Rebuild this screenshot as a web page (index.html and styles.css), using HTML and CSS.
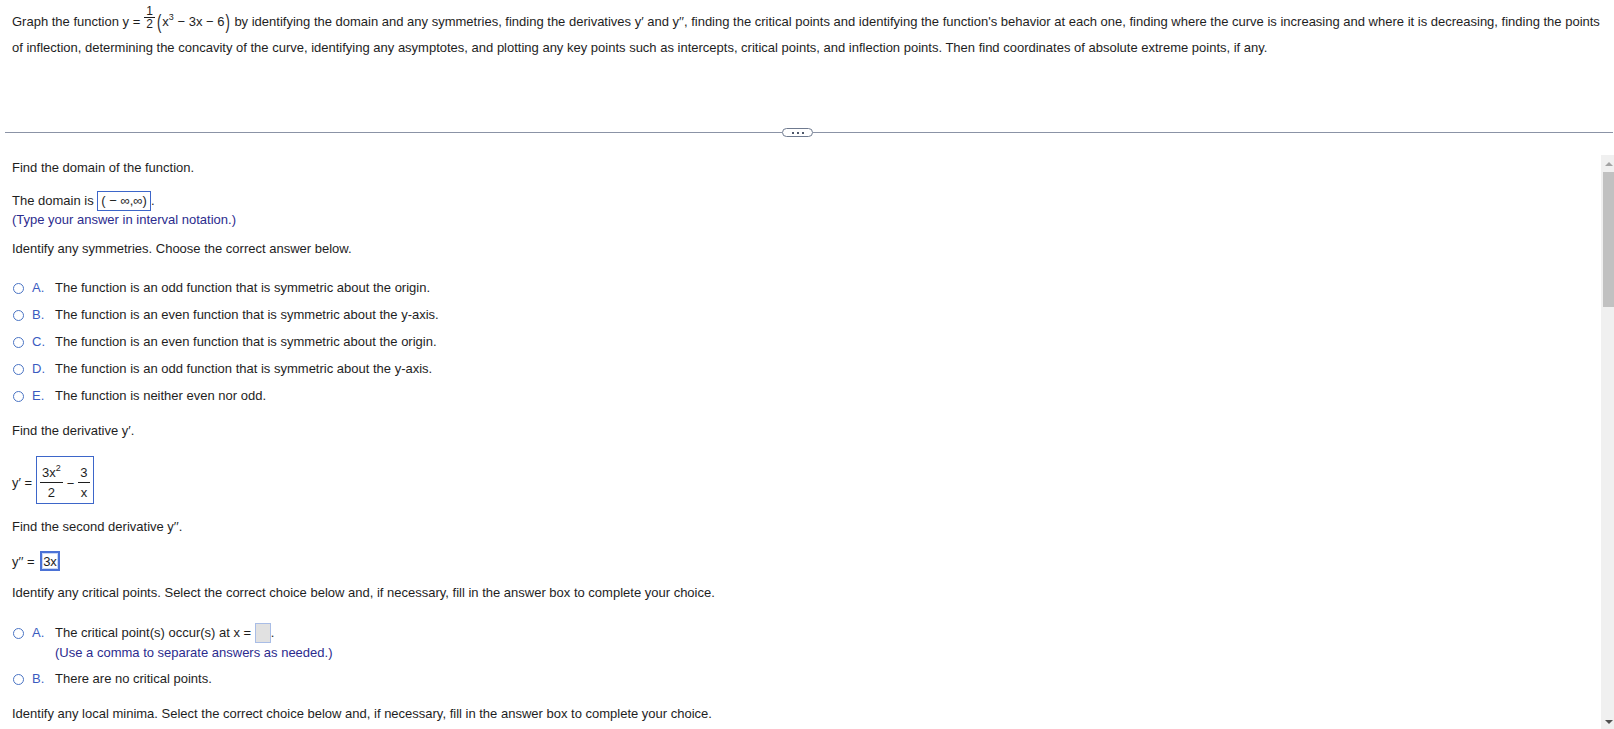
FILE: index.html
```
<!DOCTYPE html>
<html lang="en">
<head>
<meta charset="utf-8">
<title>Graph the function</title>
<link rel="stylesheet" href="styles.css">
</head>
<body>
<div class="page">
  <header class="question">
    <p class="prompt">Graph the function <span class="math">y =<span class="hfrac"><span class="hnum">1</span><span class="hden">2</span></span><span class="paren">(</span>x<sup class="sup">3</sup> − 3x − 6<span class="paren">)</span></span> by identifying the domain and any symmetries, finding the derivatives y′ and y′′, finding the critical points and identifying the function's behavior at each one, finding where the curve is increasing and where it is decreasing, finding the points of inflection, determining the concavity of the curve, identifying any asymptotes, and plotting any key points such as intercepts, critical points, and inflection points. Then find coordinates of absolute extreme points, if any.</p>
  </header>

  <div class="divider">
    <span class="divider-line left"></span>
    <span class="pill"><i></i><i></i><i></i></span>
    <span class="divider-line right"></span>
  </div>

  <div class="work">
    <main class="content">
      <p class="line q-domain">Find the domain of the function.</p>
      <div class="answer-row">The domain is&nbsp;<span class="answer-box">( − ∞,∞)</span>.</div>
      <p class="line hint">(Type your answer in interval notation.)</p>

      <p class="line q-sym">Identify any symmetries. Choose the correct answer below.</p>
      <div class="choices sym">
        <div class="choice"><span class="mark"><span class="radio"></span></span><span class="letter">A.</span><span class="body">The function is an odd function that is symmetric about the origin.</span></div>
        <div class="choice"><span class="mark"><span class="radio"></span></span><span class="letter">B.</span><span class="body">The function is an even function that is symmetric about the y-axis.</span></div>
        <div class="choice"><span class="mark"><span class="radio"></span></span><span class="letter">C.</span><span class="body">The function is an even function that is symmetric about the origin.</span></div>
        <div class="choice"><span class="mark"><span class="radio"></span></span><span class="letter">D.</span><span class="body">The function is an odd function that is symmetric about the y-axis.</span></div>
        <div class="choice"><span class="mark"><span class="radio"></span></span><span class="letter">E.</span><span class="body">The function is neither even nor odd.</span></div>
      </div>

      <p class="line q-deriv">Find the derivative y′.</p>
      <div class="deriv-row">
        <span class="lhs">y′ =</span>
        <span class="deriv-box">
          <span class="frac"><span class="num">3x<sup class="sup">2</sup></span><span class="den">2</span></span>
          <span class="op">−</span>
          <span class="frac"><span class="num">3</span><span class="den">x</span></span>
        </span>
      </div>

      <p class="line q-second">Find the second derivative y′′.</p>
      <div class="second-row"><span class="lhs2">y′′ =</span><span class="focus-box">3x</span></div>

      <p class="line q-crit">Identify any critical points. Select the correct choice below and, if necessary, fill in the answer box to complete your choice.</p>
      <div class="choices crit">
        <div class="choice tall"><span class="mark"><span class="radio"></span></span><span class="letter">A.</span><span class="body"><span class="body-line">The critical point(s) occur(s) at x =&nbsp;<span class="empty-box"></span>.</span><span class="hint sub">(Use a comma to separate answers as needed.)</span></span></div>
        <div class="choice"><span class="mark"><span class="radio"></span></span><span class="letter">B.</span><span class="body">There are no critical points.</span></div>
      </div>

      <p class="line q-min">Identify any local minima. Select the correct choice below and, if necessary, fill in the answer box to complete your choice.</p>
    </main>
    <div class="scrollbar">
      <span class="sb-btn top"><span class="arrow-up"></span></span>
      <span class="sb-thumb"></span>
      <span class="sb-track"></span>
      <span class="sb-btn bottom"><span class="arrow-down"></span></span>
    </div>
  </div>
</div>
</body>
</html>
```
FILE: styles.css
```
* { box-sizing: border-box; }
html, body { margin: 0; padding: 0; }
body {
  font-family: "Liberation Sans", Arial, sans-serif;
  font-size: 13px;
  color: #1e1e1e;
  background: #ffffff;
  width: 1614px;
  height: 729px;
  overflow: hidden;
}
.page { display: flex; flex-direction: column; height: 729px; }

.question { padding: 6px 6px 0 12px; height: 60px; }
.prompt { margin: 0; line-height: 26px; }
.math { white-space: nowrap; }

.hfrac {
  display: inline-block;
  vertical-align: -2px;
  text-align: center;
  font-size: 12px;
  margin: 0 1px 0 4px;
}
.hnum { display: block; line-height: 11px; padding: 0 2px; border-bottom: 1px solid #1e1e1e; }
.hden { display: block; line-height: 13px; }

.frac {
  display: inline-flex;
  flex-direction: column;
  align-items: center;
  vertical-align: middle;
}
.frac .num { padding: 0 1px; border-bottom: 1px solid #1e1e1e; line-height: 13px; }
.frac .den { line-height: 13px; }
.paren { display: inline-block; transform: scaleY(1.6); margin: 0 1px; line-height: 13px; }
.sup { font-size: 9px; vertical-align: 6px; line-height: 0; }

.divider {
  display: flex;
  align-items: center;
  height: 9px;
  margin-top: 68px;
  padding-left: 5px;
  padding-right: 1px;
}
.divider-line { height: 1px; background: #8b93a6; }
.divider-line.left { width: 777px; }
.divider-line.right { flex: 1; }
.pill {
  width: 31px;
  height: 9px;
  border: 1px solid #6f7a8f;
  border-radius: 5px;
  display: flex;
  align-items: center;
  justify-content: center;
  gap: 3px;
}
.pill i { width: 2px; height: 2px; background: #4f596c; display: block; }

.work { flex: 1; display: flex; margin-top: 18px; min-height: 0; }
.content { flex: 1; padding-left: 12px; overflow: hidden; }

.line { margin: 0; line-height: 16px; }
.hint { color: #2c2c8e; }
.q-domain { margin-top: 5px; }
.answer-row { margin-top: 15px; height: 20px; display: flex; align-items: center; line-height: 16px; }
.answer-box {
  display: inline-flex;
  align-items: center;
  height: 20px;
  padding: 0 3px;
  border: 1px solid #3d66c9;
}
.content > .hint { margin-top: 1px; }
.q-sym { margin-top: 13px; }

.choices { display: flex; flex-direction: column; }
.choices.sym { margin-top: 23px; gap: 11px; }
.choice { display: flex; align-items: flex-start; line-height: 16px; }
.mark { width: 20px; height: 16px; display: flex; align-items: center; padding-left: 1px; }
.radio {
  width: 11px;
  height: 11px;
  border: 1.3px solid #4a74c4;
  border-radius: 50%;
  display: block;
}
.letter { width: 23px; color: #3b5bbf; }
.body { display: flex; flex-direction: column; }

.q-deriv { margin-top: 19px; }
.deriv-row { margin-top: 17px; height: 48px; display: flex; align-items: center; }
.lhs { width: 24px; padding-top: 4px; }
.deriv-box {
  height: 48px;
  border: 1px solid #3d66c9;
  display: flex;
  align-items: center;
  padding: 4px 3px 0 3px;
  gap: 2px;
}
.deriv-box .frac .num { line-height: 18px; padding: 0 2px; margin-bottom: 2px; }
.deriv-box .frac .den { line-height: 14px; margin-top: 1px; }
.op { padding: 0 2px; padding-top: 2px; }

.q-second { margin-top: 15px; }
.second-row { margin-top: 16px; height: 20px; display: flex; align-items: center; }
.lhs2 { width: 28px; }
.focus-box {
  height: 20px;
  width: 20px;
  border: 2px solid #4b72d6;
  display: inline-flex;
  align-items: center;
  justify-content: center;
  box-shadow: inset 0 0 0 1px #c9d7f5;
}

.q-crit { margin-top: 14px; }
.choices.crit { margin-top: 22px; gap: 10px; }
.choice.tall .mark, .choice.tall .letter { height: 20px; display: flex; align-items: center; }
.body-line { height: 20px; display: flex; align-items: center; }
.empty-box {
  display: inline-block;
  width: 16px;
  height: 20px;
  background: #e1e1e1;
  border: 1px solid #a9bde6;
}
.hint.sub { margin-top: 2px; line-height: 16px; }
.q-min { margin-top: 19px; }

.scrollbar {
  width: 13px;
  background: #f0f0f0;
  display: flex;
  flex-direction: column;
}
.sb-btn { height: 17px; display: flex; align-items: center; justify-content: center; padding-left: 2px; }
.sb-btn.bottom { height: 15px; }
.arrow-up {
  width: 0; height: 0;
  border-left: 4px solid transparent;
  border-right: 4px solid transparent;
  border-bottom: 4px solid #a3a3a3;
}
.arrow-down {
  width: 0; height: 0;
  border-left: 4px solid transparent;
  border-right: 4px solid transparent;
  border-top: 4px solid #505050;
}
.sb-thumb { height: 135px; margin-left: 2px; background: #c1c1c1; }
.sb-track { flex: 1; }
```
